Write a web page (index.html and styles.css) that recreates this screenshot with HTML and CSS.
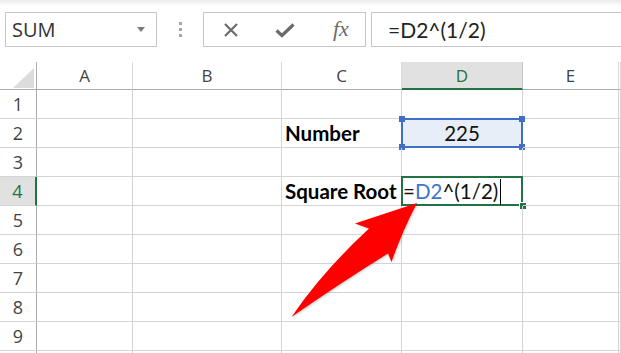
FILE: index.html
```html
<!DOCTYPE html>
<html lang="en">
<head>
    <meta charset="UTF-8">
    <title>Square Root in Excel</title>
    <link rel="stylesheet" href="styles.css">
</head>
<body>
    <div class="page">
        <div class="toolbar">
            <div class="namebox">
                <span>SUM</span>
                <svg class="caret" width="8" height="5" viewBox="0 0 8 5"><path d="M0 0H8L4 5Z" fill="#7a7a7a"/></svg>
            </div>
            <div class="grip"><i></i><i></i><i></i></div>
            <div class="fbuttons">
                <svg class="icon" width="16" height="16" viewBox="0 0 16 16"><path d="M2 2L14 14M14 2L2 14" stroke="#6b6b6b" stroke-width="2.2"/></svg>
                <svg class="icon" width="20" height="16" viewBox="0 0 20 16"><path d="M1.5 8.5L7 13.5L18.5 2.5" fill="none" stroke="#6b6b6b" stroke-width="3.2"/></svg>
                <span class="fx">fx</span>
            </div>
            <div class="formula">=D2^(1/2)</div>
        </div>

        <div class="sheet">
            <div class="corner"><span></span></div>
            <div class="colhead">A</div>
            <div class="colhead">B</div>
            <div class="colhead">C</div>
            <div class="colhead selected">D</div>
            <div class="colhead">E</div>
            <div class="colhead"></div>

            <div class="rowhead">1</div>
            <div class="cell"></div><div class="cell"></div><div class="cell"></div><div class="cell"></div><div class="cell"></div><div class="cell"></div>

            <div class="rowhead">2</div>
            <div class="cell"></div><div class="cell"></div>
            <div class="cell label">Number</div>
            <div class="cell ref">
                <div class="refbox"><i class="h tl"></i><i class="h tr"></i><i class="h bl"></i><i class="h br"></i></div>
                <span class="value">225</span>
            </div>
            <div class="cell"></div><div class="cell"></div>

            <div class="rowhead">3</div>
            <div class="cell"></div><div class="cell"></div><div class="cell"></div><div class="cell"></div><div class="cell"></div><div class="cell"></div>

            <div class="rowhead selected">4</div>
            <div class="cell"></div><div class="cell"></div>
            <div class="cell label">Square Root</div>
            <div class="cell active">
                <div class="activebox"><i class="fill"></i></div>
                <span class="edit">=<b>D2</b>^(1/2)<i class="caretline"></i></span>
            </div>
            <div class="cell"></div><div class="cell"></div>

            <div class="rowhead">5</div>
            <div class="cell"></div><div class="cell"></div><div class="cell"></div><div class="cell"></div><div class="cell"></div><div class="cell"></div>
            <div class="rowhead">6</div>
            <div class="cell"></div><div class="cell"></div><div class="cell"></div><div class="cell"></div><div class="cell"></div><div class="cell"></div>
            <div class="rowhead">7</div>
            <div class="cell"></div><div class="cell"></div><div class="cell"></div><div class="cell"></div><div class="cell"></div><div class="cell"></div>
            <div class="rowhead">8</div>
            <div class="cell"></div><div class="cell"></div><div class="cell"></div><div class="cell"></div><div class="cell"></div><div class="cell"></div>
            <div class="rowhead">9</div>
            <div class="cell"></div><div class="cell"></div><div class="cell"></div><div class="cell"></div><div class="cell"></div><div class="cell"></div>
            <div class="rowhead"></div>
            <div class="cell"></div><div class="cell"></div><div class="cell"></div><div class="cell"></div><div class="cell"></div><div class="cell"></div>
        </div>

        <!-- red callout arrow pointing at the formula -->
        <svg class="arrow" width="621" height="353" viewBox="0 0 621 353">
            <path d="M417 203L355 223.5L369 228.5Q322 272 291.5 317Q342 282 388 253.5L391.5 262Q402 232 417 203Z" fill="#ff0000"/>
        </svg>
    </div>
</body>
</html>
```

FILE: styles.css
```css
body {
    margin: 0;
    background: #fff;
    overflow: hidden;
    font-family: 'Open Sans', sans-serif;
}

.page {
    position: relative;
    width: 621px;
    height: 353px;
    overflow: hidden;
}

/* formula bar */
.toolbar {
    height: 62px;
    box-sizing: border-box;
    padding: 12px 0 0 5px;
    display: flex;
    align-items: flex-start;
    background: linear-gradient(#ebebeb, #fff 6px);
}

.namebox {
    width: 152px;
    height: 35px;
    box-sizing: border-box;
    border: 1px solid #c6c6c6;
    background: #fff;
    display: flex;
    align-items: center;
    justify-content: space-between;
    padding: 0 11px 0 6px;
    font-size: 20px;
    color: #333;
}

.namebox span {
    margin-top: -1px;
}

.grip {
    width: 46px;
    height: 35px;
    display: flex;
    flex-direction: column;
    align-items: center;
    justify-content: center;
    gap: 3px;
}

.grip i {
    width: 3px;
    height: 3px;
    background: #a6a6a6;
}

.fbuttons {
    width: 163px;
    height: 35px;
    box-sizing: border-box;
    border: 1px solid #c6c6c6;
    background: #fff;
    display: flex;
    align-items: center;
    padding-left: 19px;
    gap: 36px;
}

.fx {
    font-family: 'Liberation Serif', serif;
    font-style: italic;
    font-size: 22px;
    color: #6b6b6b;
    margin-left: 2px;
    margin-top: -2px;
}

.formula {
    flex: 1;
    height: 35px;
    margin-left: 5px;
    box-sizing: border-box;
    border: 1px solid #c6c6c6;
    border-right: none;
    background: #fff;
    padding-left: 16px;
    font-family: Lato, sans-serif;
    font-size: 21px;
    line-height: 33px;
    color: #222;
}

/* grid */
.sheet {
    display: grid;
    grid-template-columns: 37px 96px 149px 120px 121px 96px 2px;
    grid-template-rows: 28px;
    grid-auto-rows: 29px;
}

.corner {
    border-right: 1px solid #ababab;
    border-bottom: 1px solid #ababab;
    position: relative;
}

.corner span {
    position: absolute;
    left: 13px;
    top: 6px;
    width: 21px;
    height: 20px;
    background: #dcdcdc;
    clip-path: polygon(100% 0, 100% 100%, 0 100%);
}

.colhead {
    border-right: 1px solid #dadada;
    border-bottom: 1px solid #ababab;
    text-align: center;
    font-size: 17px;
    line-height: 28px;
    color: #444;
}

.colhead.selected {
    background: #e1e1e1;
    color: #217346;
    border-bottom: 2px solid #217346;
    border-right-color: #c6c6c6;
}

.rowhead {
    border-right: 1px solid #ababab;
    border-bottom: 1px solid #d4d4d4;
    text-align: center;
    font-size: 18px;
    line-height: 29px;
    color: #444;
    box-sizing: border-box;
}

.rowhead.selected {
    background: #e1e1e1;
    color: #217346;
    border-right: 2px solid #217346;
}

.cell {
    border-right: 1px solid #d4d4d4;
    border-bottom: 1px solid #d4d4d4;
    box-sizing: border-box;
    position: relative;
    font-family: Lato, sans-serif;
    font-size: 20.5px;
    color: #000;
    white-space: nowrap;
}

.label {
    font-weight: bold;
    padding: 2px 0 0 3px;
}

.ref .value {
    position: relative;
    display: block;
    text-align: center;
    padding-top: 2px;
    color: #111;
}

.refbox {
    position: absolute;
    left: -1px;
    top: -1px;
    right: -1px;
    bottom: -1px;
    border: 2px solid #3f6fc6;
    background: #e8eef8;
}

.refbox .h {
    position: absolute;
    width: 6px;
    height: 6px;
    background: #3f6fc6;
}

.h.tl { left: -4px; top: -4px; }
.h.tr { right: -4px; top: -4px; }
.h.bl { left: -4px; bottom: -4px; }
.h.br { right: -4px; bottom: -4px; }

.activebox {
    position: absolute;
    left: -1px;
    top: -1px;
    right: -1px;
    bottom: -1px;
    border: 2px solid #217346;
}

.activebox .fill {
    position: absolute;
    right: -5px;
    bottom: -5px;
    width: 6px;
    height: 6px;
    background: #217346;
    border: 1px solid #fff;
    border-right: none;
    border-bottom: none;
}

.edit {
    position: relative;
    display: inline-block;
    padding: 2px 0 0 1px;
    color: #111;
}

.edit b {
    font-weight: normal;
    color: #3f73d0;
}

.caretline {
    display: inline-block;
    width: 1px;
    height: 26px;
    background: #000;
    margin-left: 2px;
    vertical-align: -6px;
}

.arrow {
    position: absolute;
    left: 0;
    top: 0;
    filter: drop-shadow(1px 1px 1px rgba(0, 0, 0, 0.2));
}
```
